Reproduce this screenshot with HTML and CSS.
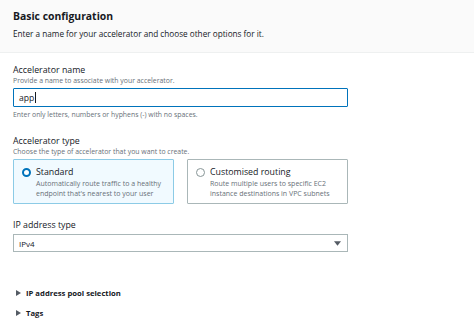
FILE: index.html
```html
<!DOCTYPE html>
<html lang="en">
<head>
  <meta charset="UTF-8" />
  <title>Basic configuration</title>
  <link rel="stylesheet" href="styles.css">
</head>
<body>

<div class="panel">
  <header class="panel-header">
    <h2>Basic configuration</h2>
    <p>Enter a name for your accelerator and choose other options for it.</p>
  </header>

  <div class="panel-body">
    <div class="field">
      <label class="field-label" for="accName">Accelerator name</label>
      <div class="field-desc">Provide a name to associate with your accelerator.</div>
      <div class="text-input"><span>app</span><span class="caret"></span></div>
      <div class="field-hint">Enter only letters, numbers or hyphens (-) with no spaces.</div>
    </div>

    <div class="field">
      <div class="field-label">Accelerator type</div>
      <div class="field-desc">Choose the type of accelerator that you want to create.</div>
      <div class="tiles">
        <div class="tile selected">
          <span class="radio"></span>
          <div>
            <div class="tile-title">Standard</div>
            <div class="tile-desc">Automatically route traffic to a healthy endpoint that's nearest to your user</div>
          </div>
        </div>
        <div class="tile">
          <span class="radio"></span>
          <div>
            <div class="tile-title">Customised routing</div>
            <div class="tile-desc">Route multiple users to specific EC2 instance destinations in VPC subnets</div>
          </div>
        </div>
      </div>
    </div>

    <div class="field">
      <div class="field-label">IP address type</div>
      <div class="select">
        <span>IPv4</span>
        <svg class="select-arrow" viewBox="0 0 8 5"><path d="M0 0 H8 L4 5 Z" /></svg>
      </div>
    </div>

    <div class="expanders">
      <div class="expander"><span class="tri"></span>IP address pool selection</div>
      <div class="expander"><span class="tri"></span>Tags</div>
    </div>
  </div>
</div>

</body>
</html>
```

FILE: styles.css
```css
body {
  margin: 0;
  font-family: 'Open Sans', sans-serif;
  color: #16191f;
  background: #ffffff;
}
.panel {
  width: 474px;
}
.panel-header {
  background: #fafafa;
  border-bottom: 1px solid #eef0f0;
  padding: 8px 13px 12px;
}
.panel-header h2 {
  margin: 0;
  font-size: 10.4px;
  line-height: 16px;
  font-weight: 700;
}
.panel-header p {
  margin: 4px 0 0;
  font-size: 8.2px;
  line-height: 12px;
}
.panel-body {
  padding: 12px 13px 0;
  width: 335px;
}
.field {
  margin-bottom: 16px;
}
.field-label {
  display: block;
  font-size: 8.8px;
  line-height: 11px;
}
.field-desc,
.field-hint {
  font-size: 6.9px;
  line-height: 10px;
  color: #687078;
}
.text-input {
  margin-top: 2px;
  height: 19px;
  box-sizing: border-box;
  border: 1.5px solid #0073bb;
  border-radius: 1px;
  padding: 0 5px;
  display: flex;
  align-items: center;
  font-size: 8.6px;
}
.caret {
  width: 1px;
  height: 11px;
  background: #16191f;
  margin-left: 1px;
}
.field-hint {
  margin-top: 3px;
}
.tiles {
  margin-top: 2px;
  display: grid;
  grid-template-columns: 161px 161px;
  gap: 13px;
}
.tile {
  height: 45px;
  box-sizing: border-box;
  border: 1px solid #aab7b8;
  border-radius: 1px;
  padding: 6px 8px;
  display: flex;
  gap: 5px;
}
.tile.selected {
  background: #f1faff;
  border-color: #8ccbe6;
}
.radio {
  flex: none;
  width: 9px;
  height: 9px;
  box-sizing: border-box;
  border: 1px solid #879596;
  border-radius: 50%;
  margin-top: 2px;
  background: #fff;
}
.selected .radio {
  border: 2.5px solid #0073bb;
}
.tile-title {
  font-size: 8.8px;
  line-height: 13px;
}
.tile-desc {
  font-size: 7px;
  line-height: 10px;
  color: #687078;
}
.select {
  margin-top: 3px;
  height: 18px;
  box-sizing: border-box;
  border: 1px solid #aab7b8;
  padding: 0 6px 0 5px;
  display: flex;
  align-items: center;
  justify-content: space-between;
  font-size: 8px;
}
.select-arrow {
  width: 7px;
  height: 5px;
  fill: #545b64;
}
.expanders {
  margin-top: 35px;
  display: flex;
  flex-direction: column;
  gap: 8px;
}
.expander {
  display: flex;
  align-items: center;
  gap: 5px;
  font-size: 7.7px;
  line-height: 12px;
  font-weight: 700;
  padding-left: 3px;
}
.tri {
  width: 0;
  height: 0;
  border-left: 5px solid #545b64;
  border-top: 3px solid transparent;
  border-bottom: 3px solid transparent;
}
```
